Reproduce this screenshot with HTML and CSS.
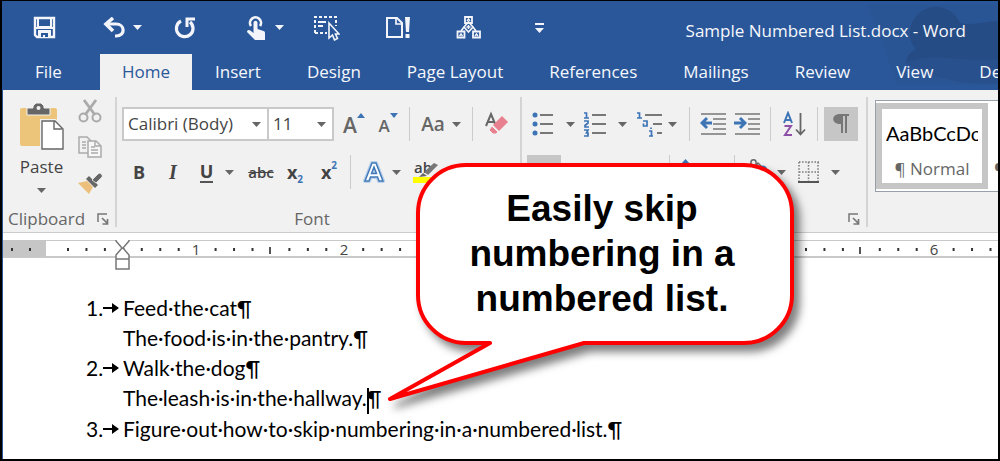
FILE: index.html
```
<!DOCTYPE html>
<html lang="en">
<head>
<meta charset="utf-8">
<title>Sample Numbered List.docx - Word</title>
<meta name="viewport" content="width=device-width, initial-scale=1">
<link rel="stylesheet" href="styles.css">
</head>
<body>
<svg class="defs" aria-hidden="true">
  <symbol id="caret" viewBox="0 0 9 5"><path d="M0 0h9L4.500 5z" fill="currentColor"/></symbol>
  <symbol id="launcher" viewBox="0 0 12 12"><path d="M1 9V1h9" fill="none" stroke="#777" stroke-width="1.500"/><path d="M5 5l5 5M10.500 6v5h-5" fill="none" stroke="#777" stroke-width="1.700"/></symbol>
</svg>
<div class="window">
  <header class="header">
    <svg class="backdrop" viewBox="0 0 160 88" aria-hidden="true">
      <path d="M30 4h130v80H60z" fill="#29538f" opacity=".5"/>
      <path d="M72 34a26 26 0 0 1 50-12c12 3 26-2 38-2v62c-30 2-62-4-92-20 0-8 6-12 10-14-4-4-6-8-6-14z" fill="#264c85"/>
      <path d="M66 62c30-12 60 0 94-4v24c-34 2-64-4-94-20z" fill="#28508c"/>
    </svg>
    <div class="titlebar">
      <div class="quick">
        <button class="cell" aria-label="Save"><svg class="mid" width="23" height="23" viewBox="0 0 23 23"><path d="M2 2h19v19H4l-2-2z" fill="none" stroke="#f3f5fa" stroke-width="2.400"/><path d="M5 2v9h13V2M1 12h21" fill="none" stroke="#f3f5fa" stroke-width="2"/><path d="M5 14h13v8H5z" fill="#f3f5fa"/><path d="M8 17h7v4h-3v-2h-2v2H8z" fill="#2a579a"/></svg></button>
        <button class="cell" aria-label="Undo"><svg class="mid" width="24" height="22" viewBox="0 0 24 22"><path d="M4 7h10c9 0 10 12 0 12h-1" fill="none" stroke="#f3f5fa" stroke-width="3.200"/><path d="M11 1L4 7l7 7" fill="none" stroke="#f3f5fa" stroke-width="3.600"/></svg><svg class="caret" width="9" height="5"><use href="#caret"/></svg></button>
        <button class="cell" aria-label="Repeat"><svg class="mid" width="22" height="22" viewBox="0 0 22 22"><path d="M7 4a8.300 8.300 0 1 0 9 1" fill="none" stroke="#f3f5fa" stroke-width="3.200"/><path d="M13 10V2h8" fill="none" stroke="#f3f5fa" stroke-width="3"/></svg></button>
        <button class="cell" aria-label="Touch mode"><svg class="mid" width="18" height="26" viewBox="0 0 18 26"><path d="M4 11a5.500 5.500 0 1 1 9 0" fill="none" stroke="#f3f5fa" stroke-width="2.600"/><path d="M6.500 8c0-3 4-3 4 0v6l6 2c1 0 1.500 1 1.500 2v7H8L0 17c0-2 2-3 4-1l2.500 2z" fill="#f3f5fa"/></svg><svg class="caret" width="9" height="5"><use href="#caret"/></svg></button>
        <button class="cell" aria-label="Select objects"><svg class="mid" width="26" height="26" viewBox="0 0 26 26"><path d="M1 18V2h21v9M1 18h12" fill="none" stroke="#f3f5fa" stroke-width="2" stroke-dasharray="3 2"/><path d="M4 7h8M4 11h5" stroke="#f3f5fa" stroke-width="1.800"/><path d="M15 8v15l3.500-3 2 5 3-1.500-2-4.500H25z" fill="#2a579a" stroke="#f3f5fa" stroke-width="1.600"/></svg></button>
        <button class="cell" aria-label="Document check"><svg class="mid" width="26" height="23" viewBox="0 0 26 23"><path d="M2 2h10l5 5v14H2z" fill="none" stroke="#f3f5fa" stroke-width="2"/><path d="M11 2v6h6" fill="none" stroke="#f3f5fa" stroke-width="1.700"/><path d="M20 1h5l-1 15h-3zM20.500 18h4v4h-4z" fill="#f3f5fa"/></svg></button>
        <button class="cell" aria-label="Document map"><svg class="mid" width="25" height="23" viewBox="0 0 25 23"><path d="M9 1h7v6H9zM1.500 15.500h7v6h-7zM17 15.500h7v6h-7z" fill="none" stroke="#f3f5fa" stroke-width="1.800"/><path d="M12.500 6l4.500 5-4.500 5L8 11zM8 11l-3 4M17 11l3 4" fill="none" stroke="#f3f5fa" stroke-width="1.600"/><path d="M12.500 9v4M10.500 11h4M11 5l1.500-2L14 5M3.500 20L5 18l1.500 2M19 20l1.500-2 1.500 2" fill="none" stroke="#f3f5fa" stroke-width="1.400"/></svg></button>
        <button class="cell" aria-label="Customize toolbar"><svg class="mid" width="9" height="10" viewBox="0 0 9 10"><path d="M0 0h9v2H0zM0 5h9L4.500 10z" fill="#f3f5fa"/></svg></button>
      </div>
      <h1 class="title">Sample Numbered List.docx - Word</h1>
    </div>
    <nav class="tabs">
      <a class="tab file" href="#">File</a>
      <a class="tab active" href="#">Home</a>
      <a class="tab" href="#">Insert</a>
      <a class="tab" href="#">Design</a>
      <a class="tab" href="#">Page Layout</a>
      <a class="tab" href="#">References</a>
      <a class="tab" href="#">Mailings</a>
      <a class="tab" href="#">Review</a>
      <a class="tab" href="#">View</a>
      <a class="tab" href="#">Developer</a>
    </nav>
  </header>

  <section class="ribbon">
    <div class="group clipboard">
      <div class="clip-tools">
        <button class="paste">
          <svg width="44" height="47" viewBox="0 0 44 47"><rect y="5" width="37" height="38" rx="2" fill="#ecc47a"/><path d="M7 12V5h6V3l3-3h5l3 3v2h6v7z" fill="#666" stroke="#f1f1f1"/><circle cx="18.500" cy="5" r="2" fill="#f1f1f1"/><path d="M22 18h13l8 8v20H22z" fill="#fff" stroke="#f1f1f1" stroke-width="4"/><path d="M22 18h13l8 8v20H22z" fill="#fff" stroke="#666" stroke-width="1.400"/><path d="M34 18v8h8" fill="none" stroke="#666" stroke-width="1.400"/></svg>
          <span>Paste</span>
          <svg class="caret" width="9" height="5"><use href="#caret"/></svg>
        </button>
        <div class="clip-side">
          <button aria-label="Cut"><svg width="26" height="24" viewBox="0 0 26 24"><path d="M7 1l11 15M19 1L8 16" stroke="#aaa" stroke-width="2.800"/><circle cx="6.500" cy="18.500" r="4" fill="none" stroke="#aaa" stroke-width="2"/><circle cx="19.500" cy="18.500" r="4" fill="none" stroke="#aaa" stroke-width="2"/></svg></button>
          <button aria-label="Copy"><svg width="26" height="24" viewBox="0 0 26 24"><path d="M2 2h8l4 4v12H2z" fill="#f1f1f1" stroke="#aaa" stroke-width="1.500"/><path d="M5 7h4M5 10h4M5 13h4" stroke="#aaa" stroke-width="1.400"/><path d="M11 6h8l5 5v11H11z" fill="#f7f7f7" stroke="#aaa" stroke-width="1.500"/><path d="M18 6v5h6M14 12h4M14 15h7M14 18h7" fill="none" stroke="#aaa" stroke-width="1.400"/></svg></button>
          <button aria-label="Format painter"><svg width="26" height="24" viewBox="0 0 26 24"><path d="M1 12l9-2 6 6-4 7z" fill="#ecc07c"/><path d="M9 8l3-3 9 9-3 3z" fill="#666"/><path d="M15 9l6-6c2-2 5 1 4 3l-6 6z" fill="#666" stroke="#f1f1f1" stroke-width=".8"/></svg></button>
        </div>
      </div>
      <div class="foot"><span>Clipboard</span><button aria-label="Clipboard options"><svg width="12" height="12"><use href="#launcher"/></svg></button></div>
    </div>

    <div class="group font">
      <div class="row">
        <span class="combo family"><select aria-label="Font"><option>Calibri (Body)</option></select><svg class="caret" width="9" height="5"><use href="#caret"/></svg></span>
        <span class="combo size"><select aria-label="Font size"><option>11</option></select><svg class="caret" width="9" height="5"><use href="#caret"/></svg></span>
        <button class="tool grow" aria-label="Grow font"><span>A</span><svg width="8" height="5" viewBox="0 0 8 5"><path d="M0 5h8L4 0z" fill="#3d74b5"/></svg></button>
        <button class="tool shrink" aria-label="Shrink font"><span>A</span><svg width="8" height="5" viewBox="0 0 8 5"><path d="M0 0h8L4 5z" fill="#3d74b5"/></svg></button>
        <i class="sep"></i>
        <button class="tool wide case" aria-label="Change case"><span>Aa</span><svg class="caret" width="9" height="5"><use href="#caret"/></svg></button>
        <i class="sep"></i>
        <button class="tool clear" aria-label="Clear formatting"><svg width="24" height="26" viewBox="0 0 24 26"><path d="M1 15L6 3l5 12M3 11h6" fill="none" stroke="#666" stroke-width="2"/><path d="M8 14l9-9 6 6-9 9z" fill="#e8808f"/><path d="M7 15l6 6-2 2H8l-4-4z" fill="#e8808f" stroke="#f1f1f1"/></svg></button>
      </div>
      <div class="row">
        <button class="tool letter bold">B</button>
        <button class="tool letter italic">I</button>
        <button class="tool wide letter under"><span>U</span><svg class="caret" width="9" height="5"><use href="#caret"/></svg></button>
        <button class="tool strike">abc</button>
        <button class="tool letter script">x<sub>2</sub></button>
        <button class="tool letter script">x<sup>2</sup></button>
        <i class="sep"></i>
        <button class="tool wide effects" aria-label="Text effects"><svg width="22" height="22" viewBox="0 0 22 22"><path d="M2 20L9 2h4l7 18h-4l-1.500-4h-7L6 20zM8.500 12.500h5L11 6z" fill="#fff" stroke="#b9d0ea" stroke-width="4" stroke-linejoin="round"/><path d="M2 20L9 2h4l7 18h-4l-1.500-4h-7L6 20zM8.500 12.500h5L11 6z" fill="#fff" stroke="#4179b8" stroke-width="1.500"/></svg><svg class="caret" width="9" height="5"><use href="#caret"/></svg></button>
        <button class="tool marker" aria-label="Highlight"><span>ab</span><svg width="26" height="20" viewBox="0 0 26 20"><path d="M0 14h22v6H0z" fill="#ff0"/><path d="M11 9L21 0l4 2L15 12z" fill="#777"/><path d="M10 10l4 3-8 1z" fill="#666"/></svg></button>
      </div>
      <div class="foot centered"><span>Font</span></div>
    </div>

    <div class="group para">
      <div class="row">
        <button class="tool wide" aria-label="Bullets"><svg width="22" height="24" viewBox="0 0 22 24"><g fill="#3d74b5"><circle cx="3" cy="3" r="2.500"/><circle cx="3" cy="12" r="2.500"/><circle cx="3" cy="21" r="2.500"/></g><path d="M8 3h13M8 12h13M8 21h13" stroke="#777" stroke-width="1.800"/></svg><svg class="caret" width="9" height="5"><use href="#caret"/></svg></button>
        <button class="tool wide" aria-label="Numbering"><svg width="22" height="26" viewBox="0 0 22 26"><path d="M0 2h2.500v5M0 7h5M0 10h4v2L1 14.500V16h4M0 19h4l-1.500 3H4v3H0" fill="none" stroke="#3d74b5" stroke-width="1.700"/><path d="M8 4h14M8 13h14M8 22h14" stroke="#777" stroke-width="1.800"/></svg><svg class="caret" width="9" height="5"><use href="#caret"/></svg></button>
        <button class="tool wide multi" aria-label="Multilevel list"><svg width="25" height="26" viewBox="0 0 25 26"><path d="M0 2h2.500v5M0 7h5M6 10h4v5H6.500v-2.500M14 18v-1.500M12 20h2.500v5M12 25h4" fill="none" stroke="#3d74b5" stroke-width="1.700"/><path d="M8 4h17M16 13h9M20 22h5" stroke="#777" stroke-width="1.800"/></svg><svg class="caret" width="9" height="5"><use href="#caret"/></svg></button>
        <i class="sep"></i>
        <button class="tool" aria-label="Decrease indent"><svg width="26" height="22" viewBox="0 0 26 22"><path d="M1 1h25M13 6h13M13 11h13M13 16h13M1 21h25" stroke="#777" stroke-width="1.700"/><path d="M12 10H3M7 5l-5 5 5 5" fill="none" stroke="#3d74b5" stroke-width="2.900"/></svg></button>
        <button class="tool" aria-label="Increase indent"><svg width="26" height="22" viewBox="0 0 26 22"><path d="M1 1h25M14 6h12M14 11h12M14 16h12M1 21h25" stroke="#777" stroke-width="1.700"/><path d="M0 10h10M6 5l5 5-5 5" fill="none" stroke="#3d74b5" stroke-width="2.900"/></svg></button>
        <i class="sep"></i>
        <button class="tool" aria-label="Sort"><svg width="23" height="26" viewBox="0 0 23 26"><path d="M1 12L5 2l4 10M2.500 9h5" fill="none" stroke="#3d74b5" stroke-width="2"/><path d="M1.500 15H8l-6 9h7" fill="none" stroke="#8e50a8" stroke-width="2"/><path d="M17.500 2v21M13 18.500l4.500 5 4.500-5" fill="none" stroke="#666" stroke-width="1.800"/></svg></button>
        <i class="sep"></i>
        <button class="tool on" aria-label="Show paragraph marks" aria-pressed="true"><svg width="17" height="20" viewBox="0 0 17 20"><path d="M7 0h9v2h-2v17h-2V2h-2v17H8v-9H7C-2 10-2 0 7 0z" fill="#777"/></svg></button>
      </div>
      <div class="row">
        <button class="tool on" aria-label="Align left"><svg width="22" height="20" viewBox="0 0 22 20"><path d="M0 2h22M0 7h14M0 12h22M0 17h14" stroke="#777" stroke-width="2"/></svg></button>
        <button class="tool" aria-label="Center"><svg width="22" height="20" viewBox="0 0 22 20"><path d="M0 2h22M4 7h14M0 12h22M4 17h14" stroke="#777" stroke-width="2"/></svg></button>
        <button class="tool" aria-label="Align right"><svg width="22" height="20" viewBox="0 0 22 20"><path d="M0 2h22M8 7h14M0 12h22M8 17h14" stroke="#777" stroke-width="2"/></svg></button>
        <button class="tool" aria-label="Justify"><svg width="22" height="20" viewBox="0 0 22 20"><path d="M0 2h22M0 7h22M0 12h22M0 17h22" stroke="#777" stroke-width="2"/></svg></button>
        <i class="sep"></i>
        <button class="tool wide" aria-label="Line spacing"><svg width="22" height="26" viewBox="0 0 22 26"><path d="M4.500 0L9 5H0zM4.500 26L9 21H0zM4 5h1.500v16H4z" fill="#3d74b5"/><path d="M12 7h10M12 13h10M12 19h10" stroke="#777" stroke-width="2"/></svg><svg class="caret" width="9" height="5"><use href="#caret"/></svg></button>
        <i class="sep"></i>
        <button class="tool wide shade" aria-label="Shading"><svg width="20" height="26" viewBox="0 0 20 26"><path d="M2 10V3c0-3 5-3 5 0v6M3 11l6-7 7 7-7 7z" fill="#f1f1f1" stroke="#666" stroke-width="1.500"/><path d="M11 7c6-2 8 2 8 9l-5-5z" fill="#3d74b5"/></svg><svg class="caret" width="9" height="5"><use href="#caret"/></svg></button>
        <button class="tool wide" aria-label="Borders"><svg width="21" height="22" viewBox="0 0 21 22"><path d="M1 1h20M1 11h20M1 1v19M10.500 1v19M20 1v19" fill="none" stroke="#777" stroke-width="1.500" stroke-dasharray="1.500 1.600"/><path d="M0 21h21" stroke="#555" stroke-width="2"/></svg><svg class="caret" width="9" height="5"><use href="#caret"/></svg></button>
      </div>
      <div class="foot end"><button aria-label="Paragraph options"><svg width="12" height="12"><use href="#launcher"/></svg></button></div>
    </div>

    <div class="group styles">
      <div class="gallery">
        <button class="style chosen"><span class="sample">AaBbCcDc</span><span class="name">¶ Normal</span></button>
        <button class="style" aria-label="No Spacing"><span class="sample"></span><span class="name">¶</span></button>
      </div>
    </div>
  </section>

  <div class="ruler" aria-hidden="true">
    <svg width="1200" height="34">
      <path d="M0 0h1200M0 17h1200" stroke="#c9c9c9" stroke-width="2"/>
      <rect width="43" height="17" fill="#c6c6c6"/>
      <path d="M8 8h2v3H8zM26 8h2v3h-2z" fill="#333"/>
      <path class="dots" d="M64 9.500h1100"/>
      <path d="M184 2h18v14h-18zM332 2h18v14h-18zM479 2h18v14h-18zM627 2h18v14h-18zM775 2h18v14h-18zM922 2h18v14h-18zM258 2h18v14h-18zM405 2h18v14h-18zM553 2h18v14h-18zM701 2h18v14h-18zM848 2h18v14h-18z" fill="#fff"/>
      <path d="M267 7v7M414 7v7M562 7v7M710 7v7M857 7v7" stroke="#555" stroke-width="2"/>
      <g class="nums"><text x="193" y="15">1</text><text x="341" y="15">2</text><text x="931" y="15">6</text></g>
      <path d="M113 -3h13v4l-6 7 6 7v14h-13V15l6-7-6-7zM113 19h13" fill="#fff" stroke="#777" stroke-width="1.500"/>
    </svg>
  </div>

  <main class="page">
    <ol class="list">
      <li><span class="num">1.</span><svg class="arrow" width="16" height="10" viewBox="0 0 16 10"><path d="M0 4h9V0l7 5-7 5V6H0z"/></svg><p>Feed·the·cat¶</p><p>The·food·is·in·the·pantry.¶</p></li>
      <li><span class="num">2.</span><svg class="arrow" width="16" height="10" viewBox="0 0 16 10"><path d="M0 4h9V0l7 5-7 5V6H0z"/></svg><p>Walk·the·dog¶</p><p>The·leash·is·in·the·hallway.<i class="cursor"></i>¶</p></li>
      <li><span class="num">3.</span><svg class="arrow" width="16" height="10" viewBox="0 0 16 10"><path d="M0 4h9V0l7 5-7 5V6H0z"/></svg><p>Figure·out·how·to·skip·numbering·in·a·numbered·list.¶</p></li>
    </ol>
  </main>

  <aside class="callout">
    <svg width="440" height="270" viewBox="0 0 440 270" aria-hidden="true"><path d="M86 10H364a48 48 0 0 1 48 48v82a48 48 0 0 1-48 48H204L10 244l100-56H86a48 48 0 0 1-48-48V58a48 48 0 0 1 48-48z" fill="#fff" stroke="#f00" stroke-width="4" stroke-linejoin="round"/></svg>
    <p>Easily skip numbering in a numbered list.</p>
  </aside>
</div>
</body>
</html>
```
FILE: styles.css
```
* { box-sizing: border-box; }
body {
  margin: 0;
  font: 17px/24px "Open Sans", "Noto Sans", sans-serif;
  color: #444;
  background: #fff;
}
button {
  display: flex;
  align-items: center;
  justify-content: center;
  padding: 0;
  border: 0;
  background: none;
  font: inherit;
  color: inherit;
}
svg { display: block; flex: none; }
p, h1, ol { margin: 0; padding: 0; }
.defs { position: absolute; width: 0; height: 0; }
.caret { color: #666; }

.window {
  position: relative;
  min-height: 100vh;
  overflow: hidden;
  border: 2px solid #000;
  border-top-width: 1px;
  box-shadow: inset 1px 0 #2a579a;
}

/* Title bar and tabs */
.header {
  position: relative;
  background: #2a579a;
  color: #f6f8fc;
}
.backdrop { position: absolute; right: 0; top: 0; width: 160px; height: 88px; }
.titlebar {
  position: relative;
  display: flex;
  justify-content: space-between;
  align-items: center;
  height: 53px;
}
.quick { display: flex; padding-left: 9px; }
.cell {
  display: grid;
  grid-template-columns: 1fr 26px 1fr;
  width: 71px;
  height: 48px;
}
.cell:first-child { width: 67px; }
.cell .mid { grid-column: 2; justify-self: center; }
.cell .caret { color: #f3f5fa; justify-self: center; }
.title {
  padding: 6px 32px 0 0;
  font-size: 17px;
  font-weight: 400;
  white-space: nowrap;
}
.tabs { position: relative; display: flex; height: 36px; }
.tab {
  flex: none;
  padding: 6px 23px 0;
  color: inherit;
  text-decoration: none;
}
.tab.file { width: 98px; padding-left: 33px; }
.tab.active {
  padding: 6px 22px 0;
  background: #f1f1f1;
  color: #2a579a;
}

/* Ribbon */
.ribbon {
  display: flex;
  height: 143px;
  margin-left: 1px;
  padding-top: 7px;
  background: #f1f1f1;
  border-bottom: 1px solid #ccc;
}
.group {
  display: flex;
  flex: none;
  flex-direction: column;
  height: 130px;
  border-right: 2px solid #d4d4d4;
}
.clipboard { width: 114px; }
.font { width: 405px; padding-left: 5px; }
.para { width: 346px; padding-left: 5px; }
.styles { flex: 1 1 0; min-width: 0; border: 0; padding: 3px 0 0 7px; }

.clip-tools { display: flex; height: 108px; }
.paste {
  flex-direction: column;
  justify-content: flex-start;
  width: 74px;
  padding: 6px 0 0 3px;
}
.paste span { margin: 5px 0 9px; }
.clip-side { display: flex; flex-direction: column; gap: 12px; padding-top: 2px; }

.foot {
  display: flex;
  justify-content: space-between;
  align-items: center;
  height: 16px;
  margin-top: auto;
  padding: 0 6px 0 5px;
  color: #666;
}
.foot.centered { justify-content: center; padding-right: 23px; }
.foot.end { justify-content: flex-end; }

.row { display: flex; height: 34px; margin-top: 10px; align-items: center; }
.row + .row { margin-top: 14px; }
.tool { position: relative; flex: none; width: 34px; height: 34px; }
.tool.wide { width: 54px; gap: 12px; }
.para .tool.wide { width: 52px; }
.para .tool.multi { gap: 6px; }
.para .tool.shade { gap: 8px; }
.tool.clear { width: 40px; }
.tool.on { background: #c6c6c6; }
.sep { flex: none; width: 1px; height: 34px; margin: 0 4px; background: #ccc; }
.para .sep { margin: 0 6px; }

.combo {
  position: relative;
  height: 34px;
  margin-right: -2px;
  border: 2px solid #c9c9c9;
  background: #fff;
}
.combo.family { width: 147px; }
.combo.size { width: 67px; margin-right: 3px; }
.combo select {
  width: 100%;
  height: 30px;
  padding: 0 0 0 4px;
  border: 0;
  appearance: none;
  background: none;
  font: inherit;
  color: #444;
}
.combo .caret { position: absolute; right: 6px; top: 13px; pointer-events: none; }

.grow, .shrink { align-items: flex-start; color: #666; font-weight: 600; }
.grow span { font-size: 21px; line-height: 36px; }
.shrink span { font-size: 17px; line-height: 38px; }
.grow svg, .shrink svg { margin-top: 6px; }
.case { color: #666; font-size: 19px; font-weight: 600; }
.tool.case, .tool.effects { gap: 7px; }
.letter { font-size: 18px; font-weight: 700; }
.italic { font-family: "Liberation Serif", serif; font-style: italic; font-size: 20px; }
.under span { border-bottom: 2px solid #555; line-height: 20px; }
.strike { font-size: 15px; font-weight: 600; text-decoration: line-through; }
.script sub, .script sup { font-size: 10px; line-height: 10px; color: #3d74b5; }
.script sub { padding-top: 14px; }
.script sup { padding-bottom: 14px; }
.marker { display: grid; justify-items: center; font-size: 15px; font-weight: 600; }
.marker span { grid-area: 1 / 1; padding: 0 6px 10px 0; }
.marker svg { grid-area: 1 / 1; margin-top: 2px; }

.gallery {
  display: flex;
  height: 92px;
  border: 1px solid #999fa8;
  border-right: 0;
  background: #fff;
  overflow: hidden;
}
.style {
  flex: none;
  flex-direction: column;
  align-items: stretch;
  justify-content: flex-start;
  width: 112px;
  margin: 2px 0;
  padding: 10px 4px 0;
  border: 6px solid transparent;
  color: #666;
}
.style.chosen { border-color: #c6c6c6; }
.sample {
  overflow: hidden;
  height: 28px;
  font: 20px/28px Lato, sans-serif;
  color: #000;
  text-align: left;
}
.name { margin-top: 10px; line-height: 28px; white-space: nowrap; }
.style:not(.chosen) { padding-left: 0; text-align: left; }

/* Ruler */
.ruler { height: 34px; margin: 7px 0 0 1px; overflow: hidden; }
.ruler svg { overflow: visible; }
.dots { fill: none; stroke: #333; stroke-width: 3; stroke-dasharray: 2 16.450; }
.nums { font-size: 15px; text-anchor: middle; fill: #444; }

/* Document */
.page { padding: 19px 0 0 84px; color: #000; }
.list { list-style: none; font: 21px/30px Lato, sans-serif; }
.list li {
  display: grid;
  grid-template-columns: 17px 20px 1fr;
}
.list p { grid-column: 3; white-space: nowrap; }
.arrow { align-self: center; }
.cursor {
  display: inline-block;
  width: 2px;
  height: 26px;
  margin-right: -2px;
  vertical-align: middle;
  background: #000;
}

/* Callout */
.callout { position: absolute; left: 378px; top: 154px; width: 440px; }
.callout svg { filter: drop-shadow(6px 7px 4px rgba(0, 0, 0, 0.5)); }
.callout p {
  position: absolute;
  left: 77px;
  top: 31px;
  width: 290px;
  font: 700 37px/45px "Liberation Sans", Arial, sans-serif;
  color: #000;
  text-align: center;
}
```
